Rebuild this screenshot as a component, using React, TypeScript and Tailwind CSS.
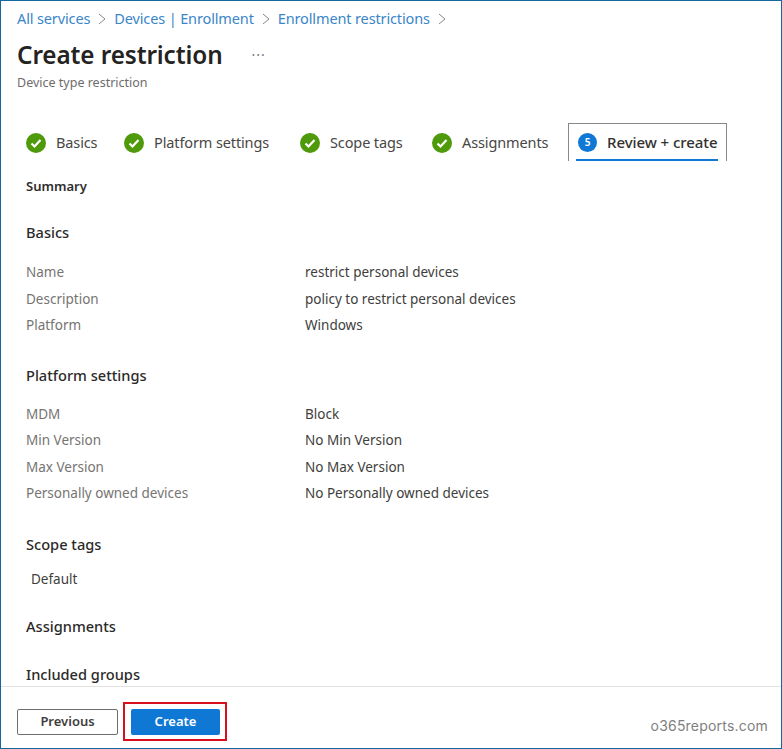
const font = "font-['Noto_Sans',sans-serif]";

function Chevron() {
	return (
		<svg width="8" height="12" viewBox="0 0 8 12" fill="none" className="mx-[8px]">
			<path d="M1 1l6 5-6 5" stroke="#8a8886" strokeWidth="1" />
		</svg>
	);
}

function Check() {
	return (
		<svg width="20" height="20" viewBox="0 0 20 20" className="shrink-0">
			<circle cx="10" cy="10" r="10" fill="#4f9a0a" />
			<path d="M5.5 10.5l3 3 6-6.5" fill="none" stroke="#fff" strokeWidth="2.2" />
		</svg>
	);
}

function Step({ label, className }: { label: string; className: string }) {
	return (
		<div className={`flex items-center gap-[10px] pt-[2px] ${className}`}>
			<Check />
			<span className="text-[14.5px] text-[#484644] tracking-[-0.12px]">{label}</span>
		</div>
	);
}

function Row({ name, value }: { name: string; value: string }) {
	return (
		<div className="flex h-[26.5px] items-center text-[13.5px]">
			<div className="w-[279px] text-[#767472]">{name}</div>
			<div className="text-[#403e3c]">{value}</div>
		</div>
	);
}

function Heading({ children, className }: { children: string; className: string }) {
	return <h2 className={`h-[22px] leading-[22px] text-[14.6px] font-medium text-[#2b2a29] ${className}`}>{children}</h2>;
}

export default function App() {
	return (
		<div className={`${font} relative flex h-[749px] w-[782px] flex-col overflow-hidden border border-[#15689f] bg-white`}>
			<div className="flex-1 overflow-hidden">
				<div className="flex h-[20px] mt-[8px] items-center pl-[16px] text-[14.5px] tracking-[-0.13px] text-[#3a86c8]">
					<span>All services</span>
					<Chevron />
					<span>Devices | Enrollment</span>
					<Chevron />
					<span>Enrollment restrictions</span>
					<Chevron />
				</div>
				<div className="mt-[8px] flex h-[36px] items-center pl-[16px]">
					<h1 className="text-[24.3px] font-semibold tracking-[-0.1px] text-[#242322]">Create restriction</h1>
					<span className="ml-[29px] text-[14px] leading-none tracking-[1px] text-[#7a7876]">···</span>
				</div>
				<p className="h-[20px] pl-[16px] text-[12.5px] leading-[20px] text-[#6e6c6a]">Device type restriction</p>

				<div className="mt-[30px] flex h-[38px] items-center pl-[25px]">
					<Step label="Basics" className="w-[98px]" />
					<Step label="Platform settings" className="w-[176px]" />
					<Step label="Scope tags" className="w-[132px]" />
					<Step label="Assignments" className="w-[136px]" />
					<div className="flex h-[38px] w-[159px] items-center gap-[10px] border border-b-0 border-[#8a8886] pl-[9px] relative">
						<span className="flex h-[19px] w-[19px] items-center justify-center rounded-full bg-[#0f78d4] text-[10px] font-semibold text-white">5</span>
						<span className="text-[15px] font-medium tracking-[-0.07px] text-[#33312f]">Review + create</span>
						<div className="absolute bottom-0 left-[7px] h-[2px] w-[142px] bg-[#0f78d4]" />
					</div>
				</div>

				<div className="pl-[25px]">
					<h2 className="mt-[15px] h-[20px] text-[13px] font-semibold leading-[20px] text-[#2f2e2d]">Summary</h2>
					<Heading className="mt-[25px]">Basics</Heading>
					<div className="mt-[16px]">
						<Row name="Name" value="restrict personal devices" />
						<Row name="Description" value="policy to restrict personal devices" />
						<Row name="Platform" value="Windows" />
					</div>
					<Heading className="mt-[25px]">Platform settings</Heading>
					<div className="mt-[15px]">
						<Row name="MDM" value="Block" />
						<Row name="Min Version" value="No Min Version" />
						<Row name="Max Version" value="No Max Version" />
						<Row name="Personally owned devices" value="No Personally owned devices" />
					</div>
					<Heading className="mt-[26px]">Scope tags</Heading>
					<p className="mt-[14px] h-[20px] pl-[5px] text-[13.5px] leading-[20px] text-[#403e3c]">Default</p>
					<Heading className="mt-[26px]">Assignments</Heading>
					<Heading className="mt-[26px]">Included groups</Heading>
				</div>
			</div>

			<div className="flex h-[62px] shrink-0 items-start border-t border-[#e4e3e2] pl-[16px] pt-[15px]">
				<div className="flex h-[39px] w-full items-center">
					<button className="h-[26px] w-[101px] rounded-[2px] border border-[#6f6e6d] text-[13px] font-semibold text-[#3f3e3d]">Previous</button>
					<div className="ml-[5px] flex h-[39px] w-[104px] items-center border-[2px] border-[#d9101c] pl-[6px]">
						<button className="h-[26px] w-[89px] rounded-[2px] bg-[#0f78d4] text-[13px] font-semibold text-white">Create</button>
					</div>
					<span className="ml-auto mr-[13px] mb-[5px] self-end leading-[20px] font-['Inter',sans-serif] text-[14px] tracking-[0.2px] text-[#7f7f7f]">o365reports.com</span>
				</div>
			</div>
		</div>
	);
}
